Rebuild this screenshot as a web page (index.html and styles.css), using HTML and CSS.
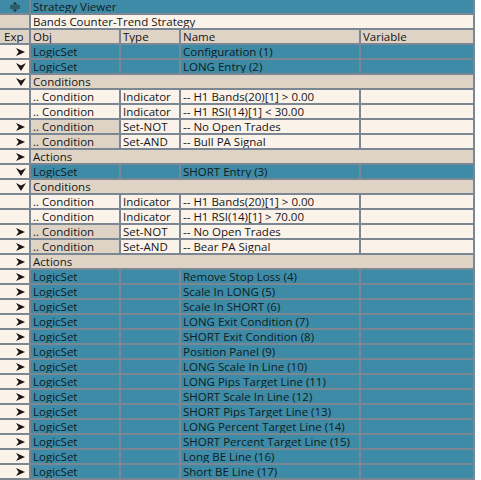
FILE: index.html
```html
<!DOCTYPE html>
<html>
<head>
<meta charset="utf-8">
<link rel="stylesheet" href="styles.css">
</head>
<body>
<div class="grid">
  <div class="c teal ctr"><svg class="ico-top" width="12" height="10" viewBox="0 0 12 10"><path d="M6 0 L8.5 2.5 H3.5 Z" fill="#1e2e36"/><path d="M1 4 H11 M1 6 H11" stroke="#1e2e36" stroke-width="1"/><path d="M6 10 L8.5 7.5 H3.5 Z" fill="#1e2e36"/></svg></div>
  <div class="c teal span">Strategy Viewer</div>

  <div class="c beige"></div>
  <div class="c cream span">Bands Counter-Trend Strategy</div>

  <div class="c beige hd">Exp</div>
  <div class="c beige">Obj</div>
  <div class="c beige">Type</div>
  <div class="c beige">Name</div>
  <div class="c beige">Variable</div>

  <div class="c cream x"><svg class="ar" viewBox="0 0 9 8"><path d="M0 0 L9 4 L0 8 L2.6 4 Z"/></svg></div>
  <div class="c teal">LogicSet</div><div class="c teal"></div><div class="c teal">Configuration (1)</div><div class="c teal"></div>

  <div class="c cream x"><svg class="dn" viewBox="0 0 10 8"><path d="M0 0 L5 2.4 L10 0 L5 8 Z"/></svg></div>
  <div class="c teal">LogicSet</div><div class="c teal"></div><div class="c teal">LONG Entry (2)</div><div class="c teal"></div>

  <div class="c cream x"><svg class="dn" viewBox="0 0 10 8"><path d="M0 0 L5 2.4 L10 0 L5 8 Z"/></svg></div>
  <div class="c beige span">Conditions</div>

  <div class="c cream"></div>
  <div class="c cream">.. Condition</div><div class="c cream">Indicator</div><div class="c cream">-- H1 Bands(20)[1] &gt; 0.00</div><div class="c cream"></div>

  <div class="c cream"></div>
  <div class="c cream">.. Condition</div><div class="c cream">Indicator</div><div class="c cream">-- H1 RSI(14)[1] &lt; 30.00</div><div class="c cream"></div>

  <div class="c cream x"><svg class="ar" viewBox="0 0 9 8"><path d="M0 0 L9 4 L0 8 L2.6 4 Z"/></svg></div>
  <div class="c beige">.. Condition</div><div class="c cream">Set-NOT</div><div class="c cream">-- No Open Trades</div><div class="c cream"></div>

  <div class="c cream x"><svg class="ar" viewBox="0 0 9 8"><path d="M0 0 L9 4 L0 8 L2.6 4 Z"/></svg></div>
  <div class="c beige">.. Condition</div><div class="c cream">Set-AND</div><div class="c cream">-- Bull PA Signal</div><div class="c cream"></div>

  <div class="c cream x"><svg class="ar" viewBox="0 0 9 8"><path d="M0 0 L9 4 L0 8 L2.6 4 Z"/></svg></div>
  <div class="c beige span">Actions</div>

  <div class="c cream x"><svg class="dn" viewBox="0 0 10 8"><path d="M0 0 L5 2.4 L10 0 L5 8 Z"/></svg></div>
  <div class="c teal">LogicSet</div><div class="c teal"></div><div class="c teal">SHORT Entry (3)</div><div class="c teal"></div>

  <div class="c cream x"><svg class="dn" viewBox="0 0 10 8"><path d="M0 0 L5 2.4 L10 0 L5 8 Z"/></svg></div>
  <div class="c beige span">Conditions</div>

  <div class="c cream"></div>
  <div class="c cream">.. Condition</div><div class="c cream">Indicator</div><div class="c cream">-- H1 Bands(20)[1] &gt; 0.00</div><div class="c cream"></div>

  <div class="c cream"></div>
  <div class="c cream">.. Condition</div><div class="c cream">Indicator</div><div class="c cream">-- H1 RSI(14)[1] &gt; 70.00</div><div class="c cream"></div>

  <div class="c cream x"><svg class="ar" viewBox="0 0 9 8"><path d="M0 0 L9 4 L0 8 L2.6 4 Z"/></svg></div>
  <div class="c beige">.. Condition</div><div class="c cream">Set-NOT</div><div class="c cream">-- No Open Trades</div><div class="c cream"></div>

  <div class="c cream x"><svg class="ar" viewBox="0 0 9 8"><path d="M0 0 L9 4 L0 8 L2.6 4 Z"/></svg></div>
  <div class="c beige">.. Condition</div><div class="c cream">Set-AND</div><div class="c cream">-- Bear PA Signal</div><div class="c cream"></div>

  <div class="c cream x"><svg class="ar" viewBox="0 0 9 8"><path d="M0 0 L9 4 L0 8 L2.6 4 Z"/></svg></div>
  <div class="c beige span">Actions</div>

  <div class="c cream x"><svg class="ar" viewBox="0 0 9 8"><path d="M0 0 L9 4 L0 8 L2.6 4 Z"/></svg></div>
  <div class="c teal">LogicSet</div><div class="c teal"></div><div class="c teal">Remove Stop Loss (4)</div><div class="c teal"></div>

  <div class="c cream x"><svg class="ar" viewBox="0 0 9 8"><path d="M0 0 L9 4 L0 8 L2.6 4 Z"/></svg></div>
  <div class="c teal">LogicSet</div><div class="c teal"></div><div class="c teal">Scale In LONG (5)</div><div class="c teal"></div>

  <div class="c cream x"><svg class="ar" viewBox="0 0 9 8"><path d="M0 0 L9 4 L0 8 L2.6 4 Z"/></svg></div>
  <div class="c teal">LogicSet</div><div class="c teal"></div><div class="c teal">Scale In SHORT (6)</div><div class="c teal"></div>

  <div class="c cream x"><svg class="ar" viewBox="0 0 9 8"><path d="M0 0 L9 4 L0 8 L2.6 4 Z"/></svg></div>
  <div class="c teal">LogicSet</div><div class="c teal"></div><div class="c teal">LONG Exit Condition (7)</div><div class="c teal"></div>

  <div class="c cream x"><svg class="ar" viewBox="0 0 9 8"><path d="M0 0 L9 4 L0 8 L2.6 4 Z"/></svg></div>
  <div class="c teal">LogicSet</div><div class="c teal"></div><div class="c teal">SHORT Exit Condition (8)</div><div class="c teal"></div>

  <div class="c cream x"><svg class="ar" viewBox="0 0 9 8"><path d="M0 0 L9 4 L0 8 L2.6 4 Z"/></svg></div>
  <div class="c teal">LogicSet</div><div class="c teal"></div><div class="c teal">Position Panel (9)</div><div class="c teal"></div>

  <div class="c cream x"><svg class="ar" viewBox="0 0 9 8"><path d="M0 0 L9 4 L0 8 L2.6 4 Z"/></svg></div>
  <div class="c teal">LogicSet</div><div class="c teal"></div><div class="c teal">LONG Scale In Line (10)</div><div class="c teal"></div>

  <div class="c cream x"><svg class="ar" viewBox="0 0 9 8"><path d="M0 0 L9 4 L0 8 L2.6 4 Z"/></svg></div>
  <div class="c teal">LogicSet</div><div class="c teal"></div><div class="c teal">LONG Pips Target Line (11)</div><div class="c teal"></div>

  <div class="c cream x"><svg class="ar" viewBox="0 0 9 8"><path d="M0 0 L9 4 L0 8 L2.6 4 Z"/></svg></div>
  <div class="c teal">LogicSet</div><div class="c teal"></div><div class="c teal">SHORT Scale In Line (12)</div><div class="c teal"></div>

  <div class="c cream x"><svg class="ar" viewBox="0 0 9 8"><path d="M0 0 L9 4 L0 8 L2.6 4 Z"/></svg></div>
  <div class="c teal">LogicSet</div><div class="c teal"></div><div class="c teal">SHORT Pips Target Line (13)</div><div class="c teal"></div>

  <div class="c cream x"><svg class="ar" viewBox="0 0 9 8"><path d="M0 0 L9 4 L0 8 L2.6 4 Z"/></svg></div>
  <div class="c teal">LogicSet</div><div class="c teal"></div><div class="c teal">LONG Percent Target Line (14)</div><div class="c teal"></div>

  <div class="c cream x"><svg class="ar" viewBox="0 0 9 8"><path d="M0 0 L9 4 L0 8 L2.6 4 Z"/></svg></div>
  <div class="c teal">LogicSet</div><div class="c teal"></div><div class="c teal">SHORT Percent Target Line (15)</div><div class="c teal"></div>

  <div class="c cream x"><svg class="ar" viewBox="0 0 9 8"><path d="M0 0 L9 4 L0 8 L2.6 4 Z"/></svg></div>
  <div class="c teal">LogicSet</div><div class="c teal"></div><div class="c teal">Long BE Line (16)</div><div class="c teal"></div>

  <div class="c cream x"><svg class="ar" viewBox="0 0 9 8"><path d="M0 0 L9 4 L0 8 L2.6 4 Z"/></svg></div>
  <div class="c teal">LogicSet</div><div class="c teal"></div><div class="c teal">Short BE Line (17)</div><div class="c teal"></div>
</div>
</body>
</html>
```
FILE: styles.css
```css
html, body {
  margin: 0;
  padding: 0;
  background: #ffffff;
}
body {
  font-family: "Open Sans", "Liberation Sans", sans-serif;
  font-size: 11.5px;
  color: #161616;
}
.grid {
  display: grid;
  grid-template-columns: 29px 88px 58px 178px 112px;
  grid-auto-rows: 13px;
  gap: 2px;
  padding: 0 2px 2px 0;
  width: 473px;
  background: #7b8792;
}
.c {
  padding-left: 2px;
  line-height: 13px;
  white-space: nowrap;
  overflow: hidden;
  display: flex;
  align-items: center;
}
.c:nth-child(5n+4) {}
.teal { background: #3d8ba6; color: #0f1c22; }
.cream { background: #fbf3ea; }
.beige { background: #ded3c5; }
.span { grid-column: 2 / -1; }
.hd { padding-left: 4px; }
.ctr { justify-content: center; padding-left: 0; }
.x { justify-content: flex-end; padding-right: 4px; }
.ar { width: 9px; height: 8px; fill: #1d1712; }
.dn { width: 10px; height: 8px; fill: #1d1712; margin-right: -1px; }
.ico-top { display: block; }
```
